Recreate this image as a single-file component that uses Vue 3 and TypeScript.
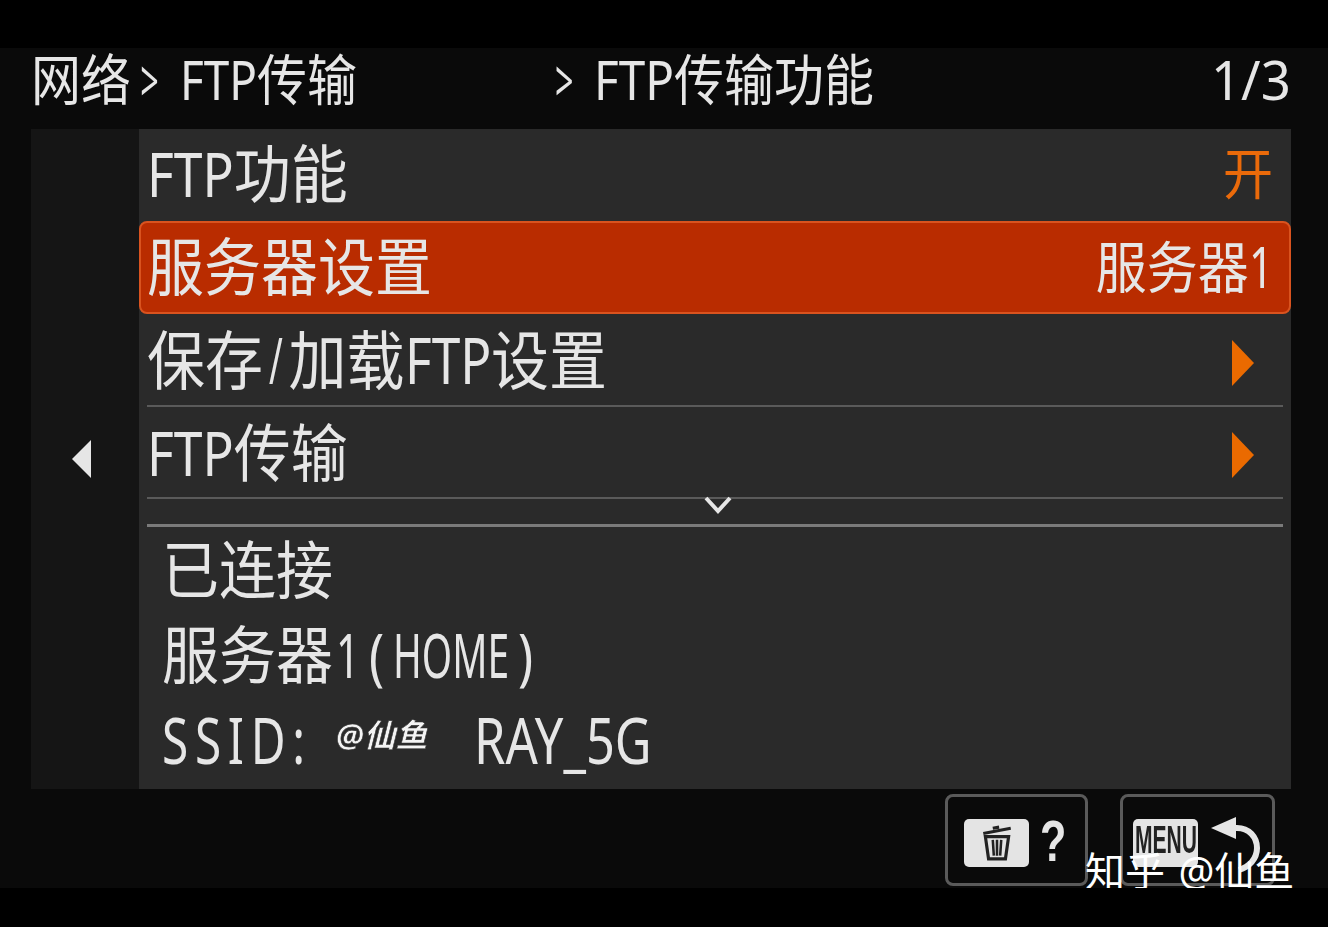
<template>
  <div class="page">
    <div class="screen">
      <div class="osd">
        <header class="title">
          <span class="crumb"><span>网络</span><i class="gt">&gt;</i><span v-fit="77">FTP</span><span>传输</span></span>
          <span class="crumb crumb--sub"><i class="gt">&gt;</i><span v-fit="80">FTP</span><span>传输功能</span></span>
          <span class="page-no"><span v-fit="80">1/3</span></span>
        </header>

        <section class="panel">
          <aside class="side">
            <svg width="20" height="38" viewBox="0 0 20 38"><path d="M19 0V38L0 19Z" fill="#e6e6e6" /></svg>
          </aside>
          <div class="main">
            <div class="row row--raise">
              <span class="tall"><span v-fit="87">FTP</span>功能</span>
              <span class="tall value value--on">开</span>
            </div>
            <div class="row row--active row--raise">
              <span class="tall">服务器设置</span>
              <span class="tall value">服务器<span v-fit="24">1</span></span>
            </div>
            <div class="row row--line row--save">
              <span class="tall">保存<span class="slash" v-fit="14">/</span><span class="after-slash">加载</span><span v-fit="86">FTP</span>设置</span>
              <svg class="go" width="24" height="48" viewBox="0 0 24 48"><path d="M1 1L23 24L1 47Z" fill="#ea6a00" /></svg>
            </div>
            <div class="row row--line row--short">
              <span class="tall"><span v-fit="87">FTP</span>传输</span>
              <svg class="go" width="24" height="48" viewBox="0 0 24 48"><path d="M1 1L23 24L1 47Z" fill="#ea6a00" /></svg>
            </div>
            <div class="more">
              <svg width="30" height="18" viewBox="0 0 30 18"><path d="M3 2L15 15L27 2" fill="none" stroke="#e6e6e6" stroke-width="4" /></svg>
            </div>
            <div class="status">
              <div class="line">已连接</div>
              <div class="line">服务器<span class="one" v-fit="24">1</span><span class="paren" v-fit="15">(</span><span class="home" v-fit="116">HOME</span><span class="paren" v-fit="15">)</span></div>
              <div class="line line--ssid"><span class="ssid" v-fit="150">SSID:</span><span class="net" v-fit="178">RAY_5G</span></div>
              <span class="mark">@仙鱼</span>
            </div>
          </div>
        </section>

        <footer class="keys">
          <div class="key key--help">
            <span class="chip">
              <svg width="32" height="38" viewBox="0 0 30 36">
                <path d="M2 9L28 4" stroke="#222" stroke-width="3" />
                <path d="M11 4L17 3" stroke="#222" stroke-width="3" />
                <path d="M4 12H26L23 33H7Z" fill="none" stroke="#222" stroke-width="3" />
                <path d="M11 15L12 30M15 15V30M19 15L18 30" stroke="#222" stroke-width="2.4" />
              </svg>
            </span>
            <b class="help" v-fit="26">?</b>
          </div>
          <div class="key key--menu">
            <span class="chip"><span class="menu-txt" v-fit="62">MENU</span></span>
            <svg class="back" width="50" height="56" viewBox="0 0 50 56">
              <path d="M20 11H26C38 11 46 20 46 31C46 42 38 50 28 53" fill="none" stroke="#e6e6e6" stroke-width="6" />
              <path d="M0 11L25 0V22Z" fill="#e6e6e6" />
            </svg>
          </div>
        </footer>
      </div>
      <span class="credit">知乎 @仙鱼</span>
    </div>
  </div>
</template>

<script setup lang="ts">
import type { Directive } from 'vue'

// the camera font is much narrower than anything installed, so squeeze latin runs to a given width
const vFit: Directive<HTMLElement, number> = {
  mounted(el, binding) {
    el.style.display = 'inline-block'
    el.style.whiteSpace = 'nowrap'
    const natural = el.offsetWidth
    el.style.transformOrigin = '0 50%'
    el.style.transform = `scaleX(${binding.value / natural})`
    el.style.marginRight = `${binding.value - natural}px`
  },
}
</script>

<style>
html, body {
  margin: 0;
  background: #000;
}
</style>

<style scoped>
.page {
  width: 1328px;
  height: 927px;
  padding: 48px 0 39px;
  box-sizing: border-box;
  background: #000;
  overflow: hidden;
  color: #e6e6e6;
  font-family: "Noto Sans", "Noto Sans CJK SC", sans-serif;
}

.screen {
  position: relative;
  height: 840px;
  background: #0a0a0a;
  overflow: hidden;
}

.osd {
  height: 100%;
  display: flex;
  flex-direction: column;
  filter: blur(0.5px);
}

.title {
  height: 81px;
  flex: none;
  box-sizing: border-box;
  display: flex;
  align-items: center;
  padding: 0 37px 20px 31px;
  font-size: 50px;
  line-height: 62px;
}

.crumb {
  display: flex;
  align-items: center;
  white-space: nowrap;
  transform: scaleY(1.1);
}

.crumb--sub {
  margin-left: 198px;
}

.gt {
  font-style: normal;
  font-size: 38px;
  width: 49px;
  padding-left: 11px;
  box-sizing: border-box;
  transform: scale(0.85, 1.4);
  transform-origin: 0 50%;
}

.crumb--sub .gt {
  padding-left: 0;
  width: 39px;
}

.page-no {
  margin-left: auto;
  transform: scaleY(1.1);
}

.tall {
  display: inline-block;
  transform: scaleY(1.1);
}

.panel {
  margin: 0 37px 0 31px;
  height: 660px;
  flex: none;
  display: flex;
}

.side {
  width: 108px;
  flex: none;
  background: #151515;
  display: flex;
  align-items: center;
  justify-content: center;
  padding: 0 6px 0 0;
  box-sizing: border-box;
}

.main {
  flex: 1;
  background: #2a2a2a;
  position: relative;
}

.row {
  height: 92px;
  box-sizing: border-box;
  margin: 0 8px;
  display: flex;
  align-items: center;
  justify-content: space-between;
  padding: 0 10px 0 0;
  font-size: 57px;
  line-height: 80px;
  white-space: nowrap;
}

.row--raise {
  padding-bottom: 4px;
}

.row--active {
  height: 93px;
  margin: 0;
  background: #b92c00;
  border: 2px solid #d9531f;
  border-radius: 8px;
  padding-left: 6px;
  padding-right: 16px;
}

.row--line {
  border-bottom: 2px solid #5a5a5a;
}

.row--line .go {
  margin: 6px 18px 0 0;
}

.row--save {
  height: 93px;
  font-size: 58px;
}

.value {
  font-size: 51px;
}

.value--on {
  font-size: 50px;
  color: #ea6a0a;
}

.slash {
  margin-left: 6px;
}

.after-slash {
  margin-left: 6px;
}

.more {
  height: 25px;
  margin: 0 8px;
  display: flex;
  justify-content: center;
  border-bottom: 3px solid #7a7a7a;
}

.more svg {
  margin: -3px 0 0 5px;
}

.status {
  position: relative;
  padding: 0 0 0 23px;
}

.line {
  height: 85px;
  font-size: 57px;
  line-height: 85px;
  white-space: nowrap;
  transform: scaleY(1.1);
}

.one {
  margin-left: 3px;
}

.paren {
  margin-left: 9px;
}

.home {
  margin-left: 9px;
}

.line--ssid {
  font-size: 58px;
}

.ssid {
  letter-spacing: 0.14em;
}

.net {
  margin-left: 162px;
}

.mark {
  position: absolute;
  left: 197px;
  top: 188px;
  font-size: 32px;
  line-height: 40px;
  font-style: italic;
  font-weight: 700;
  color: #f4f4f4;
  -webkit-text-stroke: 0.6px #333;
}

.keys {
  flex: 1;
  display: flex;
  justify-content: flex-end;
  gap: 32px;
  padding: 5px 53px 0 0;
  box-sizing: border-box;
}

.key {
  height: 92px;
  box-sizing: border-box;
  border: 3px solid #5a5a5a;
  border-radius: 8px;
  display: flex;
  align-items: center;
}

.key--help {
  width: 143px;
  padding-left: 16px;
}

.key--menu {
  width: 155px;
  padding-left: 10px;
}

.chip {
  width: 65px;
  height: 48px;
  margin-top: 6px;
  border-radius: 5px;
  background: #e4e4e4;
  display: flex;
  align-items: center;
  justify-content: center;
  flex: none;
}

.help {
  margin: 2px 0 0 11px;
  font-size: 58px;
  line-height: 60px;
  font-family: "Liberation Sans", sans-serif;
}

.menu-txt {
  color: #222;
  font-size: 38px;
  font-weight: 700;
  font-family: "Liberation Sans", sans-serif;
  align-self: flex-start;
  line-height: 40px;
  margin-top: 1px;
}

.back {
  flex: none;
  margin: 10px 0 0 13px;
}

.credit {
  position: absolute;
  left: 1085px;
  top: 798px;
  color: #fff;
  font-size: 40px;
  line-height: 50px;
  word-spacing: 3px;
  white-space: nowrap;
}
</style>
